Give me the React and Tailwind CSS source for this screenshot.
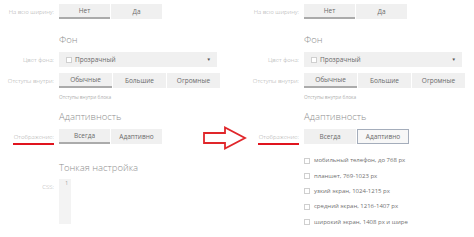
import React from "react";

const font = { fontFamily: '"Open Sans", "Noto Sans", sans-serif' };

function Label({ children, red }) {
  return (
    <div className="w-[55px] shrink-0 flex justify-end items-center pr-[1px]">
      <span
        className={
          "text-[6px] leading-none font-light text-[#a8a8a8] whitespace-nowrap " +
          (red ? "border-b-2 border-[#e0141e] pb-[3px] pl-[1px] mt-[5px]" : "")
        }
      >
        {children}
      </span>
    </div>
  );
}

function Seg({ items, active, outlined, w }) {
  return (
    <div className="flex gap-px h-[15px]">
      {items.map((it, i) => (
        <div
          key={it}
          className={
            "h-[15px] flex items-center justify-center text-[6.5px] text-[#6a6a6a] whitespace-nowrap " +
            (outlined === i
              ? "bg-[#f7f7f7] border border-[#a4adbb]"
              : i === active
              ? "bg-[#f0f0f0] border-b-2 border-[#ababab]"
              : "bg-[#f0f0f0]")
          }
          style={{ width: w }}
        >
          {it}
        </div>
      ))}
    </div>
  );
}

function Heading({ children, mt }) {
  return (
    <div className={"flex h-[14px] " + mt}>
      <div className="w-[55px] shrink-0" />
      <div className="ml-[4px] text-[9.5px] leading-[14px] font-light text-[#8f8f8f] whitespace-nowrap">
        {children}
      </div>
    </div>
  );
}

function Row({ label, red, children, mt }) {
  return (
    <div className={"flex " + mt}>
      <Label red={red}>{label}</Label>
      <div className="ml-[4px]">{children}</div>
    </div>
  );
}

function Panel({ right }) {
  return (
    <div className="w-[245px] shrink-0 pt-[4px]">
      <Row label="На всю ширину:">
        <Seg items={["Нет", "Да"]} active={0} w="51px" />
      </Row>
      <Heading mt="mt-[14px]">Фон</Heading>
      <Row label="Цвет фона:" mt="mt-[5px]">
        <div className="w-[158px] h-[15px] bg-[#f0f0f0] flex items-center pl-[7px] pr-[6px]">
          <div className="w-[6px] h-[6px] border border-[#cfcfcf] bg-white mr-[3px]" />
          <span className="text-[6.5px] text-[#6a6a6a]">Прозрачный</span>
          <span className="ml-auto text-[4.5px] text-[#555]">▼</span>
        </div>
      </Row>
      <Row label="Отступы внутри:" mt="mt-[6px]">
        <div className="flex gap-px h-[15px]">
          {["Обычные", "Большие", "Огромные"].map((it, i) => (
            <div
              key={it}
              className={
                "w-[53px] h-[15px] flex items-center justify-center text-[6.5px] text-[#6a6a6a] bg-[#f0f0f0] " +
                (i === 0 ? "border-b-2 border-[#ababab]" : "")
              }
            >
              {it}
            </div>
          ))}
        </div>
      </Row>
      <div className="flex mt-[5px] h-[8px]">
        <div className="w-[55px] shrink-0" />
        <div className="ml-[4px] text-[4.8px] leading-[8px] text-[#b0b0b0] whitespace-nowrap">
          Отступы внутри блока
        </div>
      </div>
      <Heading mt="mt-[9px]">Адаптивность</Heading>
      <Row label="Отображение:" red mt="mt-[5px]">
        {right ? (
          <Seg items={["Всегда", "Адаптивно"]} outlined={1} w="52px" />
        ) : (
          <Seg items={["Всегда", "Адаптивно"]} active={0} w="51px" />
        )}
      </Row>
      {right ? (
        <div className="mt-[8px]">
          {[
            "мобильный телефон, до 768 px",
            "планшет, 769-1023 px",
            "узкий экран, 1024-1215 px",
            "средний экран, 1216-1407 px",
            "широкий экран, 1408 px и шире",
          ].map((t) => (
            <div key={t} className="flex h-[15.4px] items-center">
              <div className="w-[55px] shrink-0" />
              <div className="ml-[4px] w-[6px] h-[6px] border border-[#cfcfcf] bg-white" />
              <span className="ml-[4px] text-[6px] text-[#707070] whitespace-nowrap">{t}</span>
            </div>
          ))}
        </div>
      ) : (
        <>
          <Heading mt="mt-[16px]">Тонкая настройка</Heading>
          <div className="flex mt-[4px]">
            <div className="w-[55px] shrink-0 flex justify-end pr-[1px] pt-[5px]">
              <span className="text-[6px] leading-none font-light text-[#a8a8a8]">CSS:</span>
            </div>
            <div className="ml-[4px] w-[12px] h-[45px] bg-[#f3f3f3] flex justify-end pr-[3px] pt-[2px]">
              <span className="text-[5px] leading-none text-[#999]">1</span>
            </div>
          </div>
        </>
      )}
    </div>
  );
}

export default function App() {
  return (
    <div className="w-[474px] h-[237px] overflow-hidden relative bg-white flex" style={font}>
      <Panel />
      <Panel right />
      <svg
        className="absolute left-[201px] top-[125px]"
        width="48"
        height="26"
        viewBox="0 0 48 26"
      >
        <polygon
          points="3,8 24,8 24,2.5 44,13 24,23.5 24,18 3,18"
          fill="white"
          stroke="#e0262a"
          strokeWidth="1.8"
          strokeLinejoin="miter"
        />
      </svg>
    </div>
  );
}
